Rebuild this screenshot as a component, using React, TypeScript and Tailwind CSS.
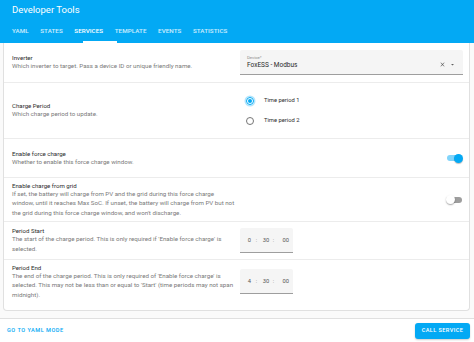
import React from "react";

const font = { fontFamily: "Roboto, 'Noto Sans', sans-serif" };

const tabs = ["YAML", "STATES", "SERVICES", "TEMPLATE", "EVENTS", "STATISTICS"];

const Label: React.FC<{ title: string; desc: string }> = ({ title, desc }) => (
  <div className="w-[225px] shrink-0">
    <div className="text-[6.1px] leading-[9px] text-[#2b2b2b]">{title}</div>
    <div className="text-[6.2px] leading-[9.6px] text-[#7a7a7a]">{desc}</div>
  </div>
);

const Toggle: React.FC<{ on: boolean }> = ({ on }) => (
  <div className="relative w-[15px] h-[6px]">
    <div className={on ? "absolute inset-0 rounded-full bg-[#81d4fa]" : "absolute inset-0 rounded-full bg-[#9e9e9e]"} />
    <div
      className={
        on
          ? "absolute top-[-1.5px] right-[-1px] w-[9px] h-[9px] rounded-full bg-[#03a9f4] shadow-[0_1px_1px_rgba(0,0,0,0.25)]"
          : "absolute top-[-1.5px] left-[-1px] w-[9px] h-[9px] rounded-full bg-white shadow-[0_1px_1.5px_rgba(0,0,0,0.35)]"
      }
    />
  </div>
);

const TimeBox: React.FC<{ h: string }> = ({ h }) => (
  <div className="w-[53px] h-[25px] bg-[#f5f5f5] border-b border-[#9e9e9e] rounded-t-[2px] flex items-center text-[5.8px] text-[#555]">
    <span className="w-[11px] text-right">{h}</span>
    <span className="w-[11px] text-center text-[#777]">:</span>
    <span className="w-[8px] text-center">30</span>
    <span className="w-[7px] text-center text-[#777]">:</span>
    <span className="w-[12px] text-right">00</span>
  </div>
);

const Radio: React.FC<{ checked: boolean; label: string }> = ({ checked, label }) => (
  <div className="flex items-center h-[20px] pl-[6px]">
    {checked ? (
      <div className="w-[8px] h-[8px] rounded-full border border-[#03a9f4] flex items-center justify-center ring-[1.5px] ring-[#b3e5fc]">
        <div className="w-[4px] h-[4px] rounded-full bg-[#03a9f4]" />
      </div>
    ) : (
      <div className="w-[8px] h-[8px] rounded-full border border-[#757575]" />
    )}
    <span className="ml-[10px] text-[5.8px] text-[#2b2b2b]">{label}</span>
  </div>
);

export default function App() {
  return (
    <div className="w-[474px] h-[342px] bg-[#fafafa] flex flex-col overflow-hidden" style={font}>
      <div className="h-[43px] bg-[#03a9f4] shrink-0 flex flex-col">
        <div className="h-[21px] flex items-center pl-[12px] text-[9.5px] text-white">Developer Tools</div>
        <div className="relative h-[22px] flex items-center pl-[12px] gap-[11.5px]">
          {tabs.map((t) => (
            <span
              key={t}
              className={
                t === "SERVICES"
                  ? "text-[6.2px] font-medium tracking-[0.1px] text-white"
                  : "text-[6.2px] font-medium tracking-[0.1px] text-white/80"
              }
            >
              {t}
            </span>
          ))}
          <div className="absolute bottom-0 left-[83px] w-[34px] h-[2px] bg-white" />
        </div>
      </div>

      <div className="px-[3px] shrink-0">
        <div className="w-[467px] h-[268px] bg-white border border-t-0 border-[#e0e0e0] rounded-b-[4px] flex flex-col">
          <div className="h-[40px] flex items-center pl-[8px] pr-[6px] gap-[3px] border-b border-[#ececec]">
            <Label title="Inverter" desc="Which inverter to target. Pass a device ID or unique friendly name." />
            <div className="flex-1 h-[25px] bg-[#f5f5f5] border-b border-[#9e9e9e] rounded-t-[2px] flex items-center pl-[7px] pr-[7px]">
              <div className="flex-1 flex flex-col">
                <span className="text-[4.3px] leading-[6px] text-[#8a8a8a]">Device*</span>
                <span className="text-[6.5px] leading-[8px] text-[#2b2b2b]">FoxESS - Modbus</span>
              </div>
              <svg width="7" height="7" viewBox="0 0 24 24" className="mt-[4px]">
                <path d="M19 6.41 17.59 5 12 10.59 6.41 5 5 6.41 10.59 12 5 17.59 6.41 19 12 13.41 17.59 19 19 17.59 13.41 12z" fill="#616161" />
              </svg>
              <svg width="7" height="7" viewBox="0 0 24 24" className="ml-[3px] mt-[4px]">
                <path d="M7 10l5 5 5-5z" fill="#616161" />
              </svg>
            </div>
          </div>

          <div className="h-[56px] flex items-center pl-[8px] pr-[6px] gap-[3px] border-b border-[#ececec]">
            <Label title="Charge Period" desc="Which charge period to update." />
            <div className="flex-1 flex flex-col">
              <Radio checked label="Time period 1" />
              <Radio checked={false} label="Time period 2" />
            </div>
          </div>

          <div className="h-[39px] flex items-center pl-[8px] pr-[6px] gap-[3px] border-b border-[#ececec]">
            <Label title="Enable force charge" desc="Whether to enable this force charge window." />
            <div className="flex-1 flex justify-end pr-[1px]">
              <Toggle on />
            </div>
          </div>

          <div className="h-[44px] flex items-center pl-[8px] pr-[6px] gap-[3px] border-b border-[#ececec]">
            <Label
              title="Enable charge from grid"
              desc="If set, the battery will charge from PV and the grid during this force charge window, until it reaches Max SoC. If unset, the battery will charge from PV but not the grid during this force charge window, and won't discharge."
            />
            <div className="flex-1 flex justify-end pr-[1px]">
              <Toggle on={false} />
            </div>
          </div>

          <div className="h-[38px] flex items-center pl-[8px] pr-[6px] gap-[3px] border-b border-[#ececec]">
            <Label
              title="Period Start"
              desc="The start of the charge period. This is only required if 'Enable force charge' is selected."
            />
            <div className="flex-1">
              <TimeBox h="0" />
            </div>
          </div>

          <div className="h-[43px] flex items-center pl-[8px] pr-[6px] gap-[3px]">
            <Label
              title="Period End"
              desc="The end of the charge period. This is only required of 'Enable force charge' is selected. This may not be less than or equal to 'Start' (time periods may not span midnight)."
            />
            <div className="flex-1">
              <TimeBox h="4" />
            </div>
          </div>
        </div>
      </div>

      <div className="mt-[7px] flex-1 bg-white border-t border-[#e0e0e0] flex items-center justify-between pl-[7px] pr-[4px]">
        <span className="text-[5.6px] font-medium tracking-[0.5px] text-[#03a9f4]">GO TO YAML MODE</span>
        <div className="w-[55px] h-[16px] rounded-[3px] bg-[#03a9f4] shadow-[0_1px_2px_rgba(0,0,0,0.2)] flex items-center justify-center text-[5.6px] font-medium tracking-[0.4px] text-white">
          CALL SERVICE
        </div>
      </div>
    </div>
  );
}
